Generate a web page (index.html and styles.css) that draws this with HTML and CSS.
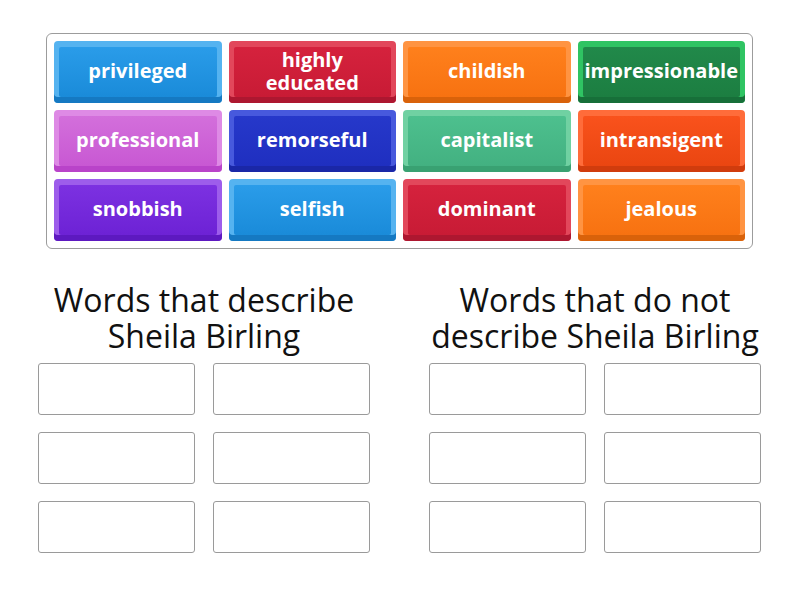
FILE: index.html
```html
<!DOCTYPE html>
<html>
<head>
<meta charset="utf-8">
<link rel="stylesheet" href="styles.css">
</head>
<body>
<div class="bank">
  <div class="tile blue"><div class="face">privileged</div></div>
  <div class="tile red"><div class="face">highly<br>educated</div></div>
  <div class="tile orange"><div class="face">childish</div></div>
  <div class="tile green"><div class="face">impressionable</div></div>
  <div class="tile orchid"><div class="face">professional</div></div>
  <div class="tile indigo"><div class="face">remorseful</div></div>
  <div class="tile mint"><div class="face">capitalist</div></div>
  <div class="tile flame"><div class="face">intransigent</div></div>
  <div class="tile purple"><div class="face">snobbish</div></div>
  <div class="tile blue"><div class="face">selfish</div></div>
  <div class="tile red"><div class="face">dominant</div></div>
  <div class="tile orange"><div class="face">jealous</div></div>
</div>
<div class="groups">
  <div class="group">
    <div class="heading">Words that describe<br>Sheila Birling</div>
    <div class="slots">
      <div class="slot"></div><div class="slot"></div>
      <div class="slot"></div><div class="slot"></div>
      <div class="slot"></div><div class="slot"></div>
    </div>
  </div>
  <div class="group">
    <div class="heading">Words that do not<br>describe Sheila Birling</div>
    <div class="slots">
      <div class="slot"></div><div class="slot"></div>
      <div class="slot"></div><div class="slot"></div>
      <div class="slot"></div><div class="slot"></div>
    </div>
  </div>
</div>
</body>
</html>
```
FILE: styles.css
```css
body {
  margin: 0;
  background: #fff;
  font-family: "Open Sans", "Liberation Sans", sans-serif;
}
.bank {
  box-sizing: border-box;
  width: 707px;
  margin: 33px 0 0 46px;
  padding: 7px;
  border: 1px solid #9c9c9c;
  border-radius: 6px;
  display: grid;
  grid-template-columns: repeat(4, 1fr);
  grid-auto-rows: 62px;
  gap: 7px;
}
.tile {
  border-radius: 4px;
  padding: 6px 5px 6px;
  display: flex;
  background: var(--edge);
  box-shadow: inset 0 -6px 0 var(--low);
}
.face {
  flex: 1;
  border-radius: 2px;
  background: linear-gradient(var(--top), var(--bot));
  display: flex;
  align-items: center;
  justify-content: center;
  text-align: center;
  color: #fff;
  font-weight: 700;
  font-size: 20px;
  line-height: 23px;
  white-space: nowrap;
  padding-bottom: 3px;
}
.blue { --edge: #55b3f0; --top: #2a9ce9; --bot: #1a8bd9; --low: #1579c2; }
.red { --edge: #e2475b; --top: #d5223d; --bot: #c81b35; --low: #ad1730; }
.orange { --edge: #ff9442; --top: #ff801c; --bot: #f77211; --low: #d9620a; }
.green { --edge: #2fc463; --top: #21894a; --bot: #1c7e41; --low: #176f39; }
.orchid { --edge: #de8ae5; --top: #d36fdb; --bot: #c858d3; --low: #b943c9; }
.indigo { --edge: #4759dd; --top: #2638ca; --bot: #1f2fc0; --low: #1a27a7; }
.mint { --edge: #70d1a2; --top: #4dc08e; --bot: #43b181; --low: #39a172; }
.flame { --edge: #ff6c3a; --top: #f9521c; --bot: #ea4611; --low: #d03c0d; }
.purple { --edge: #9d5deb; --top: #7c31e1; --bot: #6d22d5; --low: #5d19c0; }

.groups {
  display: flex;
  gap: 59px;
  margin: 33px 0 0 38px;
}
.group {
  width: 332px;
}
.heading {
  font-size: 32px;
  line-height: 36px;
  color: #111;
  text-align: center;
  white-space: nowrap;
  margin: 0 -10px 9px;
}
.slots {
  display: grid;
  grid-template-columns: repeat(2, 157px);
  grid-auto-rows: 52px;
  column-gap: 18px;
  row-gap: 17px;
}
.slot {
  border: 1px solid #9a9a9a;
  border-radius: 3px;
  background: #fff;
}
```
